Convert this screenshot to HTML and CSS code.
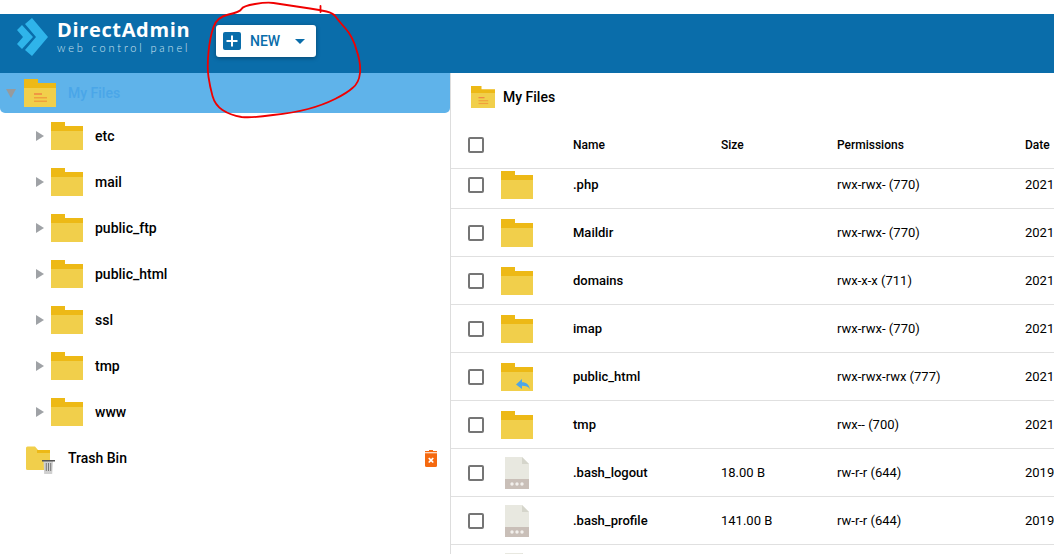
FILE: index.html
```html
<!DOCTYPE html>
<html lang="en">
<head>
<meta charset="utf-8">
<title>DirectAdmin File Manager</title>
<link rel="stylesheet" href="styles.css">
</head>
<body>
<svg class="defs" width="0" height="0" aria-hidden="true">
  <symbol id="folder" viewBox="0 0 32 28">
    <path d="M0 0h14v4h18v6H0z" fill="#edb916"/>
    <path d="M0 9h32v19H0z" fill="#f1cf4b"/>
  </symbol>
  <symbol id="folder-lines" viewBox="0 0 32 28">
    <path d="M0 0h14v4h18v6H0z" fill="#edb916"/>
    <path d="M0 9h32v19H0z" fill="#f1cf4b"/>
    <path d="M10 14.500h8v1h-8z" fill="#ef5f3c"/>
    <path d="M10 18h13v1.500H10z" fill="#f0a03c"/>
    <path d="M10 21.500h13v1.500H10z" fill="#f0a03c"/>
  </symbol>
  <symbol id="file" viewBox="0 0 24 32">
    <path d="M0 0h17l7 7v25H0z" fill="#e8e8e0"/>
    <path d="M17 0l7 7h-7z" fill="#d5d5cb"/>
    <path d="M0 22h24v10H0z" fill="#c9bfb8"/>
    <circle cx="7" cy="27" r="1.700" fill="#f2f0ec"/>
    <circle cx="12" cy="27" r="1.700" fill="#f2f0ec"/>
    <circle cx="17" cy="27" r="1.700" fill="#f2f0ec"/>
  </symbol>
</svg>

<div class="app">
  <header class="topbar">
    <div class="logo">
      <svg class="logo-mark" width="34" height="40" viewBox="0 0 34 40">
        <path d="M1 12L6 7 17 19 6 31 1 26 7 19z" fill="#2fb4ea"/>
        <path d="M16 0L32 19 16 38 9 32 20 19 9 6z" fill="#2fb4ea"/>
      </svg>
      <div class="logo-text">
        <div class="logo-name">DirectAdmin</div>
        <div class="logo-sub">web control panel</div>
      </div>
    </div>
    <button class="new-btn" type="button">
      <svg width="18" height="18" viewBox="0 0 18 18"><rect width="18" height="18" rx="2" fill="#0a6daa"/><path d="M8 3.500h2V8h4.500v2H10v4.500H8V10H3.500V8H8z" fill="#fff"/></svg>
      <span class="new-label">NEW</span>
      <span class="caret"></span>
    </button>
  </header>

  <div class="content">
    <aside class="tree">
      <div class="root active">
        <span class="arrow-down"></span>
        <svg class="folder" width="32" height="28"><use href="#folder-lines"/></svg>
        <span class="root-label">My Files</span>
      </div>
      <div class="child"><span class="arrow-right"></span><svg class="folder" width="32" height="28"><use href="#folder"/></svg><span>etc</span></div>
      <div class="child"><span class="arrow-right"></span><svg class="folder" width="32" height="28"><use href="#folder"/></svg><span>mail</span></div>
      <div class="child"><span class="arrow-right"></span><svg class="folder" width="32" height="28"><use href="#folder"/></svg><span>public_ftp</span></div>
      <div class="child"><span class="arrow-right"></span><svg class="folder" width="32" height="28"><use href="#folder"/></svg><span>public_html</span></div>
      <div class="child"><span class="arrow-right"></span><svg class="folder" width="32" height="28"><use href="#folder"/></svg><span>ssl</span></div>
      <div class="child"><span class="arrow-right"></span><svg class="folder" width="32" height="28"><use href="#folder"/></svg><span>tmp</span></div>
      <div class="child"><span class="arrow-right"></span><svg class="folder" width="32" height="28"><use href="#folder"/></svg><span>www</span></div>
      <div class="trash">
        <svg class="trash-folder" width="30" height="28" viewBox="0 0 30 28">
          <path d="M1 2a1.500 1.500 0 0 1 1.500-1.500H10l3 3.500h11.500A1.500 1.500 0 0 1 25 5.500V24H2.500A1.500 1.500 0 0 1 1 22.500z" fill="#f1cf4b"/>
          <path d="M12 4h13v3H12z" fill="#edb916"/>
          <path d="M18.500 15h9.500l-.8 13h-8z" fill="#d0d0d0"/>
          <path d="M17 14h13v1.500H17z" fill="#555"/>
          <path d="M20.800 17h1v8h-1zM23 17h1v8h-1zM25.200 17h1v8h-1z" fill="#777"/>
        </svg>
        <span class="trash-label">Trash Bin</span>
        <svg class="trash-empty" width="14" height="17" viewBox="0 0 14 17">
          <path d="M5 0h4v1h4v1.200H1V1h4z" fill="#f5690f"/>
          <path d="M1 3.200h12v12.300a1.500 1.500 0 0 1-1.500 1.500h-9A1.500 1.500 0 0 1 1 15.500z" fill="#f5690f"/>
          <path d="M5.200 7.500L7 9l1.800-1.500 1 1L8.200 10.200l1.600 1.700-1 1L7 11.400l-1.800 1.500-1-1 1.600-1.700-1.600-1.700z" fill="#fff"/>
        </svg>
      </div>
    </aside>

    <main class="files">
      <div class="crumb">
        <svg width="24" height="22" viewBox="0 0 32 28" preserveAspectRatio="none"><use href="#folder-lines"/></svg>
        <span>My Files</span>
      </div>
      <div class="row head">
        <span class="check"></span><span></span><span>Name</span><span>Size</span><span>Permissions</span><span>Date</span>
      </div>
      <div class="rows-clip">
        <div class="rows">
          <div class="row"><span class="check"></span><svg width="32" height="28"><use href="#folder"/></svg><span>.php</span><span></span><span>rwx-rwx- (770)</span><span>2021</span></div>
          <div class="row"><span class="check"></span><svg width="32" height="28"><use href="#folder"/></svg><span>Maildir</span><span></span><span>rwx-rwx- (770)</span><span>2021</span></div>
          <div class="row"><span class="check"></span><svg width="32" height="28"><use href="#folder"/></svg><span>domains</span><span></span><span>rwx-x-x (711)</span><span>2021</span></div>
          <div class="row"><span class="check"></span><svg width="32" height="28"><use href="#folder"/></svg><span>imap</span><span></span><span>rwx-rwx- (770)</span><span>2021</span></div>
          <div class="row"><span class="check"></span>
            <svg width="32" height="28" viewBox="0 0 32 28"><use href="#folder"/><path d="M15 21.500l6-5.500v3.200c4.500 0 7 2.600 8 7-1.800-2.700-4-3.500-8-3.500v3.300z" fill="#4da6e8"/></svg>
            <span>public_html</span><span></span><span>rwx-rwx-rwx (777)</span><span>2021</span></div>
          <div class="row"><span class="check"></span><svg width="32" height="28"><use href="#folder"/></svg><span>tmp</span><span></span><span>rwx-- (700)</span><span>2021</span></div>
          <div class="row"><span class="check"></span><svg class="file" width="24" height="32"><use href="#file"/></svg><span>.bash_logout</span><span>18.00 B</span><span>rw-r-r (644)</span><span>2019</span></div>
          <div class="row"><span class="check"></span><svg class="file" width="24" height="32"><use href="#file"/></svg><span>.bash_profile</span><span>141.00 B</span><span>rw-r-r (644)</span><span>2019</span></div>
          <div class="row"><span class="check"></span><svg class="file" width="24" height="32"><use href="#file"/></svg><span></span><span></span><span></span><span></span></div>
        </div>
      </div>
    </main>
  </div>

  <svg class="scribble" width="380" height="125" viewBox="0 0 380 125" fill="none">
    <path d="M228.500 14.500Q240 12 241.500 9Q243 6 255 4Q267 2 273.500 3Q280 4 290 5.500Q300 7 310 8.500Q320 10 326.500 11.500Q333 13 335.500 16.500Q338 20 345.500 28.500Q353 37 356.500 50Q361 63 360 73Q359 83 352.500 88Q347 93 335 99Q323 105 308 109Q293 113 273 115Q253 118 241.500 117Q230 115 222.500 110Q215 105 212.500 96Q210 87 208.500 77Q207 67 208.500 52Q210 37 213.500 27Q217 17 228.500 14.500M320.500 6v6" stroke="#f00000" stroke-width="1.800" stroke-linecap="round"/>
  </svg>
</div>
</body>
</html>
```
FILE: styles.css
```css
* { box-sizing: border-box; }
html, body { margin: 0; height: 100%; overflow: hidden; background: #fff; }
body { font-family: Roboto, "Liberation Sans", sans-serif; font-size: 14px; color: #000; }
.defs { display: block; height: 0; }

.app { position: relative; height: 554px; padding-top: 14px; display: flex; flex-direction: column; overflow: hidden; }

.topbar { height: 59px; flex: none; background: #0a6daa; display: flex; align-items: flex-start; padding-left: 16px; }
.logo { display: flex; align-items: flex-start; width: 200px; padding-top: 4px; }
.logo-mark { flex: none; margin-right: 7px; }
.logo-text { color: #fff; padding-top: 1px; }
.logo-name { font-family: "Open Sans", sans-serif; font-size: 20px; line-height: 22px; font-weight: 700; letter-spacing: .65px; white-space: nowrap; }
.logo-sub { font-family: Lato, sans-serif; font-size: 11px; line-height: 11px; margin-top: 1px; font-weight: 300; letter-spacing: 2.85px; white-space: nowrap; color: #cfe3f0; }

.new-btn { margin-top: 11px; width: 100px; height: 32px; border: 0; border-radius: 3px; background: #fff; box-shadow: 0 1px 4px rgba(0,0,0,.35); display: flex; align-items: center; padding: 0 0 0 7px; font: 500 14px Roboto, sans-serif; color: #0a6daa; }
.new-label { margin-left: 9px; }
.caret { margin-left: 15px; width: 0; height: 0; border: 5px solid transparent; border-top-color: #0a6daa; border-bottom: 0; }

.content { flex: 1; min-height: 0; display: flex; }

.tree { width: 451px; flex: none; border-right: 1px solid #ddd; font-weight: 500; }
.root { height: 40px; display: flex; align-items: center; padding-left: 6px; background: #5fb3ea; border-radius: 0 0 5px 5px; }
.arrow-down { width: 0; height: 0; border: 5px solid transparent; border-top: 9px solid #979a9c; border-bottom: 0; margin-right: 8px; }
.root-label { color: #4aa6e8; }
.child { height: 46px; display: flex; align-items: center; padding-left: 36px; }
.arrow-right { width: 0; height: 0; border: 5px solid transparent; border-left: 8px solid #9fa2a6; border-right: 0; margin-right: 7px; }
.folder { margin-right: 12px; flex: none; }
.trash { height: 46px; display: flex; align-items: center; padding-left: 25px; padding-right: 12px; }
.trash-folder { margin-top: 3px; flex: none; }
.trash-label { margin-left: 13px; flex: 1; }
.trash-empty { flex: none; }

.files { flex: 1; min-width: 0; font-size: 13px; }
.crumb { height: 48px; display: flex; align-items: center; padding-left: 20px; gap: 8px; font-size: 14px; font-weight: 500; }
.row { height: 48px; display: grid; grid-template-columns: 50px 72px 148px 116px 188px 60px; align-items: center; border-bottom: 1px solid #e0e0e0; white-space: nowrap; }
.row .file { margin-left: 4px; }
.row > span:nth-child(3) { font-weight: 500; }
.head { font-size: 12px; font-weight: 500; }
.check { width: 16px; height: 16px; margin-left: 17px; border: 2px solid #757575; border-radius: 2px; display: block; }
.rows-clip { overflow: hidden; height: 386px; }
.rows { margin-top: -8px; }

.scribble { position: absolute; left: 0; top: 0; pointer-events: none; }
```
